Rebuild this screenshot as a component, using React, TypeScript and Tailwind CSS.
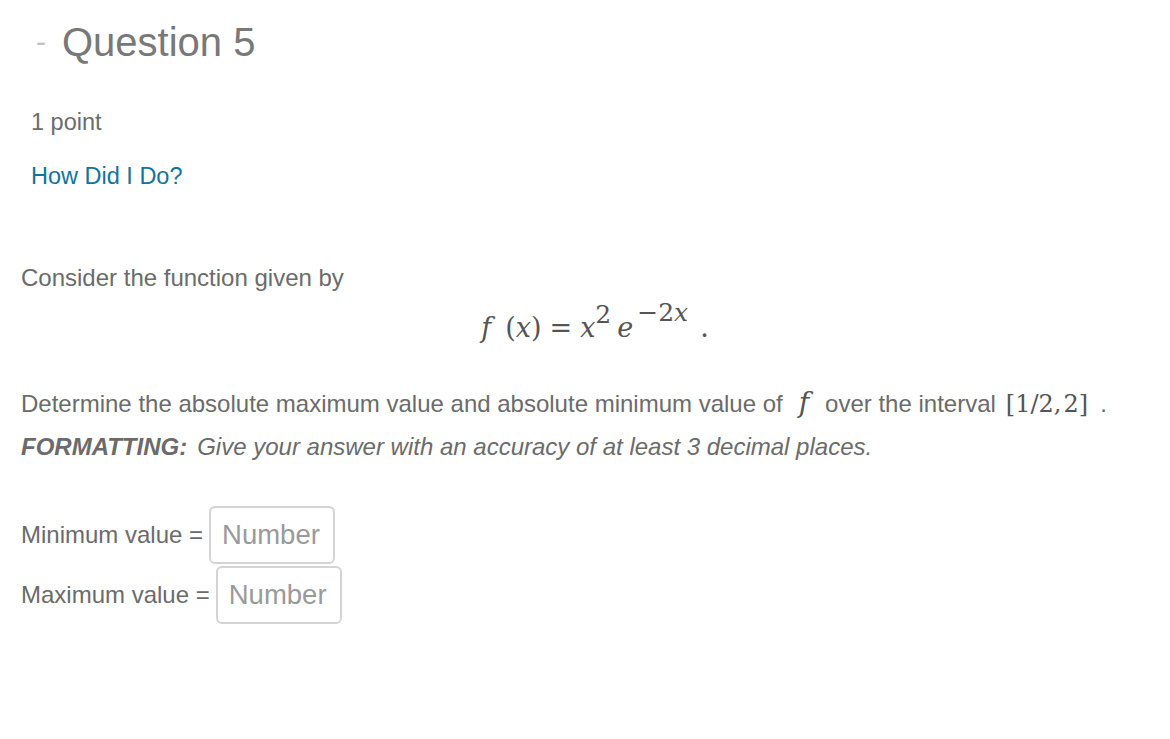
import React from "react";

const serif = { fontFamily: '"DejaVu Serif", "Liberation Serif", serif' };

function NumberInput() {
  return (
    <input
      type="text"
      placeholder="Number"
      className="h-[58px] w-[126px] rounded-[6px] border-2 border-[#d4d4d4] bg-white px-[11px] text-[27.5px] text-[#555] placeholder:text-[#9a9a9a] outline-none"
    />
  );
}

export default function App() {
  return (
    <div className="min-h-[739px] w-[1170px] bg-white text-[#6b6b6b] font-['Liberation_Sans',Arial,sans-serif]">
      <div className="flex items-center pl-[36px] pt-[18px] h-[66px] leading-[48px]">
        <span className="text-[30px] text-[#c2c2c2] w-[26px]">-</span>
        <h1 className="text-[40px] text-[#787878]">Question 5</h1>
      </div>

      <div className="pl-[31px] mt-[41px] text-[23.5px] leading-[30px]">1 point</div>
      <a href="#" className="block pl-[31px] mt-[24px] text-[23.5px] leading-[30px] text-[#13739a]">
        How Did I Do?
      </a>

      <div className="pl-[21px] mt-[72px] text-[24px] leading-[30px]">Consider the function given by</div>

      <div className="flex justify-center items-end h-[54px] pl-[20px] text-[#555]" style={serif}>
        <div className="flex items-baseline text-[27px] leading-[36px]">
          <span className="italic">f</span>
          <span className="ml-[14px]">(</span>
          <span className="italic">x</span>
          <span>)</span>
          <span className="ml-[8px]">=</span>
          <span className="italic ml-[8px]">x</span>
          <span className="relative -top-[14px] text-[25px]">2</span>
          <span className="italic ml-[6px]">e</span>
          <span className="relative -top-[16px] text-[25px] ml-[4px]">−2<span className="italic">x</span></span>
          <span className="ml-[12px]">.</span>
        </div>
      </div>

      <div className="pl-[21px] mt-[41px] flex items-baseline text-[24px] leading-[30px]">
        <span>Determine the absolute maximum value and absolute minimum value of</span>
        <span className="italic text-[28px] mx-[16px] text-[#555]" style={serif}>f</span>
        <span>over the interval</span>
        <span className="ml-[10px] text-[24px] text-[#555]" style={serif}>
          [1/2,<span className="ml-[2px]">2]</span>
        </span>
        <span className="ml-[12px]">.</span>
      </div>

      <div className="pl-[21px] mt-[13px] text-[24px] leading-[30px] italic">
        <span className="font-bold">FORMATTING:</span>
        <span className="ml-[10px]">Give your answer with an accuracy of at least 3 decimal places.</span>
      </div>

      <div className="pl-[21px] mt-[44px] flex flex-col gap-[2px] text-[24px]">
        <div className="flex items-center gap-[6px]">
          <span>Minimum value =</span>
          <NumberInput />
        </div>
        <div className="flex items-center gap-[6px]">
          <span>Maximum value =</span>
          <NumberInput />
        </div>
      </div>
    </div>
  );
}
